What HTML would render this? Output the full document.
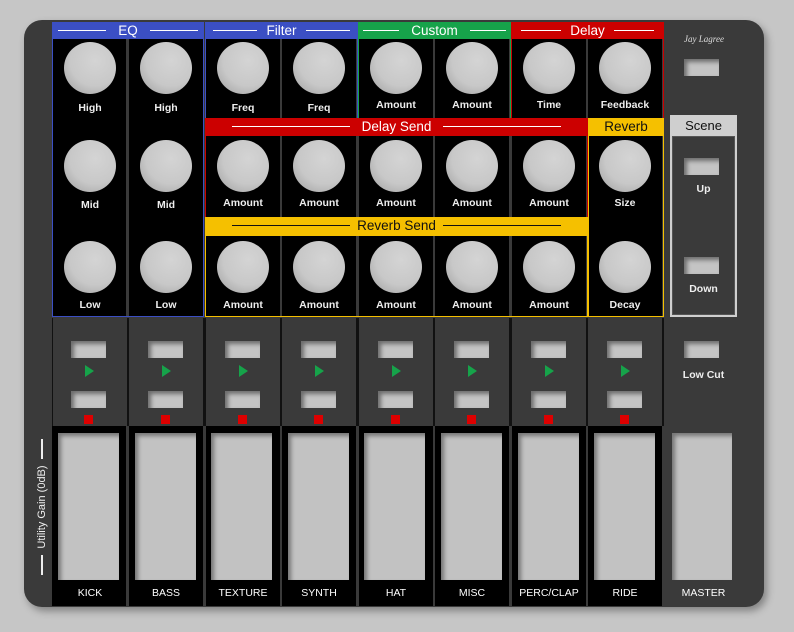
<!DOCTYPE html>
<html><head><meta charset="utf-8"><style>
*{margin:0;padding:0;box-sizing:border-box}
body{width:794px;height:632px;background:#c6c6c6;position:relative;overflow:hidden;font-family:"Liberation Sans",Arial,sans-serif}
div{position:absolute}
.body{left:24px;top:20px;width:740px;height:587px;background:#3a3a3a;border-radius:18px;box-shadow:3px 4px 8px rgba(0,0,0,.35)}
.col{background:#000;width:74px}
.k{width:52px;height:52px;border-radius:50%;background:radial-gradient(circle at 60% 36%,#d4d4d4 0%,#c8c8c8 55%,#a8a8a8 88%,#808080 100%)}
.l{width:76px;text-align:center;color:#eee;font-size:10.5px;font-weight:bold}
.h{height:17px;color:#fff;font-size:13.5px;text-align:center;line-height:17px}
.h span{position:relative;padding:0 6px}
.ln{position:absolute;top:8px;height:1px;background:#fff}
.b{width:35px;height:17px;background:#c4c4c4;box-shadow:inset 3px 3px 4px rgba(0,0,0,.45)}
.tr{width:0;height:0;border-left:9px solid #16a34a;border-top:6px solid transparent;border-bottom:6px solid transparent}
.r{width:9px;height:9px;background:#d00}
.f{width:61px;height:147px;background:#c2c2c2;box-shadow:inset 3px 3px 4px rgba(0,0,0,.4)}
.tl{width:76px;text-align:center;color:#fff;font-size:10.5px;top:587px}
.cell{background:#3a3a3a;width:74px;top:318px;height:108px}
</style></head><body>
<div class="body"></div>
<div class="col" style="left:52px;top:22px;height:294px"></div>
<div class="col" style="left:129px;top:22px;height:294px"></div>
<div class="col" style="left:206px;top:22px;height:294px"></div>
<div class="col" style="left:282px;top:22px;height:294px"></div>
<div class="col" style="left:359px;top:22px;height:294px"></div>
<div class="col" style="left:435px;top:22px;height:294px"></div>
<div class="col" style="left:512px;top:22px;height:294px"></div>
<div class="col" style="left:588px;top:22px;height:294px"></div>
<div style="left:52px;top:22px;width:152px;height:295px;border:1.5px solid #3b4fc4"></div>
<div style="left:205px;top:22px;width:153px;height:97px;border:1.5px solid #3b4fc4"></div>
<div style="left:358px;top:22px;width:153px;height:97px;border:1.5px solid #16a34a"></div>
<div style="left:511px;top:22px;width:153px;height:97px;border:1.5px solid #cc0000"></div>
<div style="left:205px;top:118px;width:383px;height:100px;border:1.5px solid #cc0000"></div>
<div style="left:205px;top:217px;width:383px;height:100px;border:1.5px solid #f5c000"></div>
<div style="left:588px;top:118px;width:76px;height:199px;border:1.5px solid #f5c000"></div>
<div class="h" style="left:52px;top:22px;width:152px;background:#3b4fc4"><div class="ln" style="left:6px;width:48px"></div><span>EQ</span><div class="ln" style="right:6px;width:48px"></div></div>
<div class="h" style="left:205px;top:22px;width:153px;background:#3b4fc4"><div class="ln" style="left:8px;width:44px"></div><span>Filter</span><div class="ln" style="right:8px;width:44px"></div></div>
<div class="h" style="left:358px;top:22px;width:153px;background:#16a34a"><div class="ln" style="left:5px;width:36px"></div><span>Custom</span><div class="ln" style="right:5px;width:36px"></div></div>
<div class="h" style="left:511px;top:22px;width:153px;background:#cc0000"><div class="ln" style="left:10px;width:40px"></div><span>Delay</span><div class="ln" style="right:10px;width:40px"></div></div>
<div class="h" style="left:205px;top:118px;width:383px;height:18px;background:#cc0000"><div class="ln" style="left:27px;width:118px"></div><span>Delay Send</span><div class="ln" style="right:27px;width:118px"></div></div>
<div class="h" style="left:588px;top:118px;width:76px;height:18px;background:#f5c000;color:#111">Reverb</div>
<div class="h" style="left:205px;top:217px;width:383px;height:19px;background:#f5c000;color:#111"><div class="ln" style="left:27px;width:118px;background:#111"></div><span>Reverb Send</span><div class="ln" style="right:27px;width:118px;background:#111"></div></div>
<div class="k" style="left:64px;top:42px"></div><div class="k" style="left:140px;top:42px"></div><div class="k" style="left:217px;top:42px"></div><div class="k" style="left:293px;top:42px"></div><div class="k" style="left:370px;top:42px"></div><div class="k" style="left:446px;top:42px"></div><div class="k" style="left:523px;top:42px"></div><div class="k" style="left:599px;top:42px"></div>
<div class="l" style="left:52px;top:102px">High</div><div class="l" style="left:128px;top:102px">High</div><div class="l" style="left:205px;top:102px">Freq</div><div class="l" style="left:281px;top:102px">Freq</div><div class="l" style="left:358px;top:99px">Amount</div><div class="l" style="left:434px;top:99px">Amount</div><div class="l" style="left:511px;top:99px">Time</div><div class="l" style="left:587px;top:99px">Feedback</div>
<div class="k" style="left:64px;top:140px"></div><div class="k" style="left:140px;top:140px"></div><div class="k" style="left:217px;top:140px"></div><div class="k" style="left:293px;top:140px"></div><div class="k" style="left:370px;top:140px"></div><div class="k" style="left:446px;top:140px"></div><div class="k" style="left:523px;top:140px"></div><div class="k" style="left:599px;top:140px"></div>
<div class="l" style="left:52px;top:199px">Mid</div><div class="l" style="left:128px;top:199px">Mid</div><div class="l" style="left:205px;top:197px">Amount</div><div class="l" style="left:281px;top:197px">Amount</div><div class="l" style="left:358px;top:197px">Amount</div><div class="l" style="left:434px;top:197px">Amount</div><div class="l" style="left:511px;top:197px">Amount</div><div class="l" style="left:587px;top:197px">Size</div>
<div class="k" style="left:64px;top:241px"></div><div class="k" style="left:140px;top:241px"></div><div class="k" style="left:217px;top:241px"></div><div class="k" style="left:293px;top:241px"></div><div class="k" style="left:370px;top:241px"></div><div class="k" style="left:446px;top:241px"></div><div class="k" style="left:523px;top:241px"></div><div class="k" style="left:599px;top:241px"></div>
<div class="l" style="left:52px;top:299px">Low</div><div class="l" style="left:128px;top:299px">Low</div><div class="l" style="left:205px;top:299px">Amount</div><div class="l" style="left:281px;top:299px">Amount</div><div class="l" style="left:358px;top:299px">Amount</div><div class="l" style="left:434px;top:299px">Amount</div><div class="l" style="left:511px;top:299px">Amount</div><div class="l" style="left:587px;top:299px">Decay</div>
<div style="left:52px;top:318px;width:612px;height:108px;background:#111"></div>
<div class="cell" style="left:53px"></div><div class="cell" style="left:129px"></div><div class="cell" style="left:206px"></div><div class="cell" style="left:282px"></div><div class="cell" style="left:359px"></div><div class="cell" style="left:435px"></div><div class="cell" style="left:512px"></div><div class="cell" style="left:588px;width:74px"></div>
<div class="b" style="left:71px;top:341px"></div><div class="b" style="left:148px;top:341px"></div><div class="b" style="left:225px;top:341px"></div><div class="b" style="left:301px;top:341px"></div><div class="b" style="left:378px;top:341px"></div><div class="b" style="left:454px;top:341px"></div><div class="b" style="left:531px;top:341px"></div><div class="b" style="left:607px;top:341px"></div>
<div class="tr" style="left:85px;top:365px"></div><div class="tr" style="left:162px;top:365px"></div><div class="tr" style="left:239px;top:365px"></div><div class="tr" style="left:315px;top:365px"></div><div class="tr" style="left:392px;top:365px"></div><div class="tr" style="left:468px;top:365px"></div><div class="tr" style="left:545px;top:365px"></div><div class="tr" style="left:621px;top:365px"></div>
<div class="b" style="left:71px;top:391px"></div><div class="b" style="left:148px;top:391px"></div><div class="b" style="left:225px;top:391px"></div><div class="b" style="left:301px;top:391px"></div><div class="b" style="left:378px;top:391px"></div><div class="b" style="left:454px;top:391px"></div><div class="b" style="left:531px;top:391px"></div><div class="b" style="left:607px;top:391px"></div>
<div class="r" style="left:84px;top:415px"></div><div class="r" style="left:161px;top:415px"></div><div class="r" style="left:238px;top:415px"></div><div class="r" style="left:314px;top:415px"></div><div class="r" style="left:391px;top:415px"></div><div class="r" style="left:467px;top:415px"></div><div class="r" style="left:544px;top:415px"></div><div class="r" style="left:620px;top:415px"></div>
<div class="col" style="left:52px;top:426px;height:180px"></div><div class="col" style="left:129px;top:426px;height:180px"></div><div class="col" style="left:206px;top:426px;height:180px"></div><div class="col" style="left:282px;top:426px;height:180px"></div><div class="col" style="left:359px;top:426px;height:180px"></div><div class="col" style="left:435px;top:426px;height:180px"></div><div class="col" style="left:512px;top:426px;height:180px"></div><div class="col" style="left:588px;top:426px;height:180px"></div>
<div class="f" style="left:58px;top:433px"></div><div class="f" style="left:135px;top:433px"></div><div class="f" style="left:211px;top:433px"></div><div class="f" style="left:288px;top:433px"></div><div class="f" style="left:364px;top:433px"></div><div class="f" style="left:441px;top:433px"></div><div class="f" style="left:518px;top:433px"></div><div class="f" style="left:594px;top:433px"></div>
<div class="tl" style="left:52px">KICK</div><div class="tl" style="left:128px">BASS</div><div class="tl" style="left:205px">TEXTURE</div><div class="tl" style="left:281px">SYNTH</div><div class="tl" style="left:358px">HAT</div><div class="tl" style="left:434px">MISC</div><div class="tl" style="left:511px">PERC/CLAP</div><div class="tl" style="left:587px">RIDE</div>
<div style="left:-50px;top:500px;width:184px;height:14px;transform:rotate(-90deg);color:#eee;font-size:11px;text-align:center;line-height:14px;white-space:nowrap"><span style="display:inline-block;width:20px;height:1.5px;background:#eee;vertical-align:middle;margin-right:6px"></span>Utility Gain (0dB)<span style="display:inline-block;width:20px;height:1.5px;background:#eee;vertical-align:middle;margin-left:6px"></span></div>
<div style="left:676px;top:34px;width:56px;color:#ddd;font-family:'Liberation Serif',serif;font-style:italic;font-size:9px;text-align:center">Jay Lagree</div>
<div class="b" style="left:684px;top:59px"></div>
<div style="left:670px;top:115px;width:67px;height:202px;background:#cfcfcf"></div>
<div style="left:672px;top:136px;width:63px;height:179px;background:#3a3a3a;border:1.5px solid #555"></div>
<div style="left:670px;top:118px;width:67px;text-align:center;font-size:13px;color:#111">Scene</div>
<div class="b" style="left:684px;top:158px"></div>
<div class="l" style="left:665px;top:183px;width:77px">Up</div>
<div class="b" style="left:684px;top:257px"></div>
<div class="l" style="left:665px;top:283px;width:77px">Down</div>
<div class="b" style="left:684px;top:341px"></div>
<div class="l" style="left:665px;top:369px;width:77px">Low Cut</div>
<div class="f" style="left:672px;top:433px;width:60px"></div>
<div class="tl" style="left:665px;width:77px">MASTER</div>
</body></html>
